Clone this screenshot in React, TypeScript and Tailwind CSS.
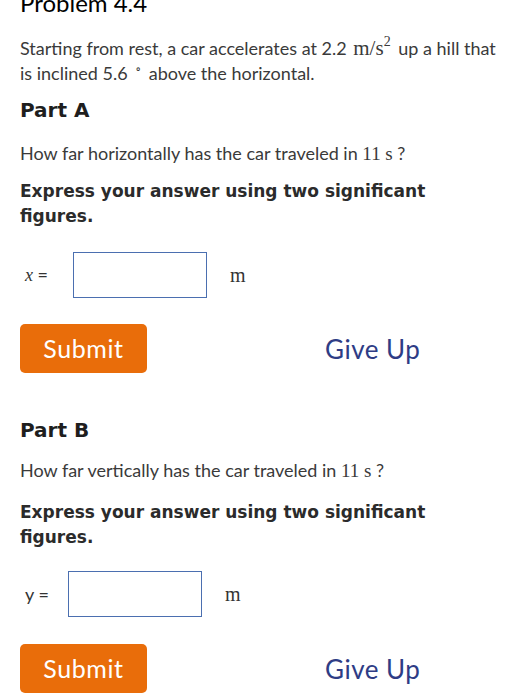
import React from 'react';

const sans = "font-['Lato','Open_Sans',sans-serif]";
const heavy = "font-['DejaVu_Sans','Open_Sans',sans-serif] font-bold";
const serif = "font-['Liberation_Serif','DejaVu_Serif',serif]";

interface PartProps {
  label: string;
  question: string;
  varName: string;
  italicVar: boolean;
  gaps: [number, number, number, number];
  labelWidth: number;
  unitGap: number;
}

const PartBlock = ({ label, question, varName, italicVar, gaps, labelWidth, unitGap }: PartProps) => (
  <div>
    <h2 className={`${heavy} text-[20px] text-[#1e1e1e] leading-[24px]`}>{label}</h2>
    <p className="text-[18px] text-[#3a3a3a] leading-[24px]" style={{ marginTop: gaps[0] }}>
      {question} <span className={`${serif} text-[19px] leading-none`}>11</span>{' '}
      <span className={`${serif} text-[19px] leading-none`}>s</span> ?
    </p>
    <p
      className={`${heavy} text-[17px] text-[#2b2b2b] leading-[25px]`}
      style={{ marginTop: gaps[1] }}
    >
      Express your answer using two significant
      <br />
      figures.
    </p>
    <div className="flex items-center h-[46px]" style={{ marginTop: gaps[2] }}>
      <span className="pl-[5px] text-[18px] text-[#333]" style={{ width: labelWidth }}>
        {italicVar ? <span className={`${serif} italic`}>{varName}</span> : varName} =
      </span>
      <div className="w-[134px] h-[46px] border-[1.5px] border-[#4b6fb0] bg-white" />
      <span className={`${serif} text-[20px] text-[#333]`} style={{ marginLeft: unitGap }}>
        m
      </span>
    </div>
    <div className="flex items-center" style={{ marginTop: gaps[3] }}>
      <button className="w-[127px] h-[49px] rounded-[5px] bg-[#e96d0a] text-white text-[25px] tracking-[0.6px] leading-none">
        Submit
      </button>
      <span className="ml-[178px] text-[26px] tracking-[0.5px] text-[#2e3c85] leading-none">Give Up</span>
    </div>
  </div>
);

export default function App() {
  return (
    <div className={`${sans} bg-white w-[527px] h-[700px] overflow-hidden px-[20px]`}>
      <div className="-mt-[11px] text-[24px] text-black leading-[28px]">Problem 4.4</div>
      <p className="mt-[19px] text-[18px] text-[#3a3a3a] leading-[25px]">
        <span className="whitespace-nowrap">
          Starting from rest, a car accelerates at 2.2{' '}
          <span className={`${serif} ml-[2px] mr-[3px] text-[21px] leading-none`}>
            m/s
            <span className="relative -top-[9px] text-[14px] leading-none">2</span>
          </span>{' '}
          up a hill that
        </span>
        <br />
        is inclined 5.6{' '}
        <span className={`${serif} relative -top-[7px] mx-[3px] text-[12px] leading-none`}>∘</span> above the
        horizontal.
      </p>
      <div className="mt-[12px]">
        <PartBlock
          label="Part A"
          question="How far horizontally has the car traveled in"
          varName="x"
          italicVar
          gaps={[19, 14, 23, 26]}
          labelWidth={53}
          unitGap={23}
        />
      </div>
      <div className="mt-[45px]">
        <PartBlock
          label="Part B"
          question="How far vertically has the car traveled in"
          varName="y"
          italicVar={false}
          gaps={[16, 18, 21, 27]}
          labelWidth={48}
          unitGap={23}
        />
      </div>
    </div>
  );
}
